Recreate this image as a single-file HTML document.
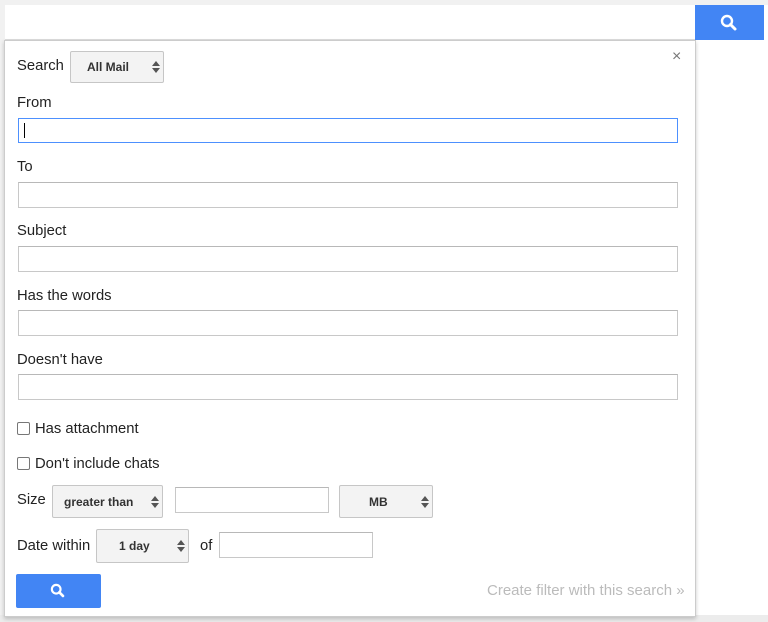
<!DOCTYPE html>
<html><head><style>
body{margin:0;width:768px;height:622px;background:#fff;position:relative;overflow:hidden;font-family:"Liberation Sans",Arial,sans-serif;font-size:15px;color:#222}
.a{position:absolute}
.lbl{position:absolute;font-size:14.8px;color:#222}
.inp{position:absolute;border:1px solid #c8c8c8;border-top-color:#b8b8b8;background:#fff;box-sizing:border-box}
.sel{position:absolute;border:1px solid #c6c6c6;border-radius:2px;background:#f3f3f3;box-sizing:border-box;font-size:12px;font-weight:bold;color:#333;display:flex;align-items:center}
.arr{position:absolute;right:7px;top:50%;margin-top:-6px;width:0;height:0}
.arr:before{content:"";position:absolute;left:-4px;top:0;border-left:4px solid transparent;border-right:4px solid transparent;border-bottom:5px solid #555}
.arr:after{content:"";position:absolute;left:-4px;top:7px;border-left:4px solid transparent;border-right:4px solid transparent;border-top:5px solid #555}
.cb{position:absolute;width:11px;height:11px;border:1px solid #777;border-radius:2px;background:#fff}
</style></head><body>
<div class="a" style="left:0;top:0;width:768px;height:5px;background:#f1f1f1"></div>
<div class="a" style="left:0;top:5px;width:5px;height:617px;background:#f1f1f1"></div>
<div class="a" style="left:5px;top:5px;width:690px;height:34px;background:#fff;border-bottom:1px solid #ddd"></div>
<div class="a" style="left:695px;top:5px;width:69px;height:35px;background:#4285f4"></div>
<svg class="a" style="left:719px;top:13px" width="20" height="20" viewBox="0 0 20 20"><circle cx="8" cy="8" r="5" fill="none" stroke="#fff" stroke-width="2.4"/><line x1="11.5" y1="11.5" x2="16" y2="16" stroke="#fff" stroke-width="3" stroke-linecap="round"/></svg>
<div class="a" style="left:0;top:615px;width:768px;height:7px;background:#ececec"></div>
<div class="a" style="left:4px;top:40px;width:690px;height:575px;background:#fff;border:1px solid #ccc;box-shadow:0 2px 4px rgba(0,0,0,.2)"></div>
<div class="a" style="left:672px;top:48px;font-size:16px;color:#777">×</div>
<div class="lbl" style="left:17px;top:58px">Search</div>
<div class="sel" style="left:70px;top:51px;width:94px;height:32px;padding-left:16px">All Mail<span class="arr"></span></div>
<div class="lbl" style="left:17px;top:95px">From</div>
<div class="inp" style="left:18px;top:118px;width:660px;height:25px;border:1px solid #4d90fe"><div class="a" style="left:5px;top:4px;width:1px;height:15px;background:#000"></div></div>
<div class="lbl" style="left:17px;top:159px">To</div>
<div class="inp" style="left:18px;top:182px;width:660px;height:26px"></div>
<div class="lbl" style="left:17px;top:223px">Subject</div>
<div class="inp" style="left:18px;top:246px;width:660px;height:26px"></div>
<div class="lbl" style="left:17px;top:288px">Has the words</div>
<div class="inp" style="left:18px;top:310px;width:660px;height:26px"></div>
<div class="lbl" style="left:17px;top:352px">Doesn't have</div>
<div class="inp" style="left:18px;top:374px;width:660px;height:26px"></div>
<div class="cb" style="left:17px;top:422px"></div>
<div class="lbl" style="left:35px;top:421px">Has attachment</div>
<div class="cb" style="left:17px;top:457px"></div>
<div class="lbl" style="left:35px;top:456px">Don't include chats</div>
<div class="lbl" style="left:17px;top:492px">Size</div>
<div class="sel" style="left:52px;top:485px;width:111px;height:33px;padding-left:11px">greater than<span class="arr"></span></div>
<div class="inp" style="left:175px;top:487px;width:154px;height:26px"></div>
<div class="sel" style="left:339px;top:485px;width:94px;height:33px;padding-left:29px">MB<span class="arr"></span></div>
<div class="lbl" style="left:17px;top:538px">Date within</div>
<div class="sel" style="left:96px;top:529px;width:93px;height:34px;padding-left:22px">1 day<span class="arr"></span></div>
<div class="lbl" style="left:200px;top:538px">of</div>
<div class="inp" style="left:219px;top:532px;width:154px;height:26px"></div>
<div class="a" style="left:16px;top:574px;width:85px;height:34px;background:#4285f4;border-radius:2px"></div>
<svg class="a" style="left:49px;top:582px" width="18" height="18" viewBox="0 0 20 20"><circle cx="8" cy="8" r="4.8" fill="none" stroke="#fff" stroke-width="2.4"/><line x1="11.5" y1="11.5" x2="15.5" y2="15.5" stroke="#fff" stroke-width="3" stroke-linecap="round"/></svg>
<div class="a" style="left:487px;top:582px;font-size:15px;color:#bbb">Create filter with this search »</div>
</body></html>
